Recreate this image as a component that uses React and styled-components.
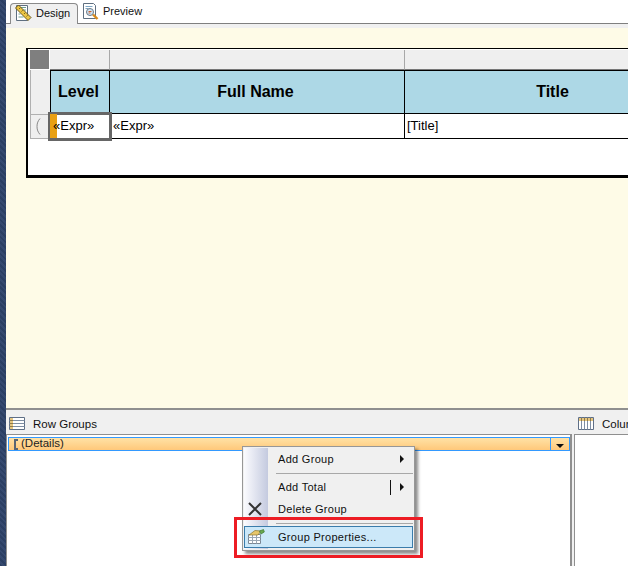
import React from "react";
import styled, { createGlobalStyle } from "styled-components";

const Global = createGlobalStyle`
  html, body { margin: 0; padding: 0; background: #fff; }
  #root { width: 628px; height: 566px; }
  svg { flex: none; }
`;
const Page = styled.div`
  position: relative; width: 628px; height: 566px; overflow: hidden; display: flex;
  font-family: "Liberation Sans", Arial, sans-serif; font-size: 11px; color: #111;
`;
const Strip = styled.div`
  width: 6px; flex: none;
  background: repeating-linear-gradient(45deg, #2b3f63 0 2px, #35496f 2px 4px);
`;
const Main = styled.div`flex: 1; min-width: 0; display: flex; flex-direction: column;`;
const TabBar = styled.div`
  height: 24px; flex: none; display: flex; align-items: flex-end; background: #fff; box-sizing: border-box;
  border-bottom: 1px solid #7f7f7f; padding-left: 4px;
`;
const ActiveTab = styled.div`
  height: 21px; box-sizing: border-box; display: flex; align-items: center; gap: 4px;
  padding: 0 7px 2px 3px; width: 68px; flex: none;
  background: #f0f0f0; border: 1px solid #8a8a8a; border-bottom: none; border-radius: 4px 4px 0 0;
  margin-bottom: -1px; position: relative;
`;
const IdleTab = styled.div`
  height: 20px; display: flex; align-items: center; gap: 3px; padding: 0 0 2px 4px;
`;
const Canvas = styled.div`
  height: 386px; flex: none; box-sizing: border-box; background: #fefbe7; padding: 20px 0 0 20px;
  border-top: 4px solid #f0f0f0; border-bottom: 2px solid #8f8f8f; overflow: hidden;
`;
const ReportBody = styled.div`
  width: 720px; height: 130px; box-sizing: border-box; background: #fff;
  border: solid #000; border-width: 1px 0 3px 2px; padding: 1px 0 0 2px;
`;
const Grid = styled.div`
  display: grid; grid-template-columns: 20px 60px 295px 1fr; grid-template-rows: 20px 44px 25px;
`;
const Corner = styled.div`background: #7f7f7f; margin: 0 1px 1px 0;`;
const ColHandle = styled.div`
  background: #efefef; border-right: 1px solid #a8a8a8; border-bottom: 1px solid #777;
  box-sizing: border-box;
`;
const RowHandle = styled.div`
  background: #efefef; box-sizing: border-box; border: solid #b0b0b0;
  border-width: ${p => p.$last ? "1px 0 1px 1px" : "0 0 0 1px"};
  display: flex; align-items: center; justify-content: center; padding-right: 4px;
`;
const HeadCell = styled.div`
  background: #add8e6; border: 1px solid #000; border-left-width: ${p => p.$first ? 1 : 0}px;
  box-sizing: border-box; display: flex; align-items: center; justify-content: center;
  padding-right: 3px; font-size: 16px; font-weight: bold; color: #000;
`;
const HeadCellLast = styled(HeadCell)`
  border-right: none; padding-right: 0; width: 295px;
`;
const DataCell = styled.div`
  background: #fff; border-bottom: 1px solid #000; border-right: ${p => p.$open ? "none" : "1px solid #000"};
  border-left: ${p => p.$first ? "1px solid #000" : "none"};
  box-sizing: border-box; font-size: 13px; color: #000; padding: 3px 0 0 ${p => p.$inset || 2}px; line-height: 18px;
  position: relative;
`;
const Selection = styled.div`
  position: absolute; left: -3px; top: -2px; width: 64px; height: 29px; box-sizing: border-box;
  border: 3px solid #666; z-index: 2;
`;
const Marker = styled.div`
  position: absolute; left: -1px; top: 0; width: 7px; height: 24px; background: #e8a013; z-index: 3;
`;
const CellText = styled.span`position: relative; z-index: 4;`;
const Panels = styled.div`flex: 1; display: flex; min-height: 0; background: #f0f0f0;`;
const RowPanel = styled.div`width: 566px; flex: none; display: flex; flex-direction: column;`;
const ColPanel = styled.div`flex: 1; display: flex; flex-direction: column; min-width: 0; margin-left: 2px;`;
const PanelHead = styled.div`
  height: 24px; flex: none; box-sizing: border-box; display: flex; align-items: center; background: #f0f0f0;
  white-space: nowrap; padding: 3px 0 0 ${p => p.$pad}px; gap: 8px; overflow: hidden; font-size: 11.5px;
`;
const RowBody = styled.div`
  flex: 1; background: #fff; border: solid #8f8f8f; border-width: 1px 2px 0 1px; padding: 2px 0 0 1px;
`;
const ColBody = styled.div`flex: 1; background: #fff; border: solid #8f8f8f; border-width: 1px 0 0 1px;`;
const DetailBar = styled.div`
  height: 14px; box-sizing: border-box; border: 1px solid #3399ff; display: flex; align-items: center;
  background: linear-gradient(#ffe2a6, #ffc87a); color: #222; padding-left: 4px; gap: 2px; width: 562px;
`;
const DetailLabel = styled.span`flex: 1; line-height: 12px; font-size: 11.5px; margin-top: -2px;`;
const DropButton = styled.div`
  width: 18px; align-self: stretch; border-left: 1px solid #3399ff; display: flex; align-items: center; justify-content: center;
`;
const Caret = styled.i`
  display: block; width: 0; height: 0; border: solid transparent; border-width: 4px 4px 0; border-top-color: #111; margin-top: 4px;
`;
const Menu = styled.div`
  position: absolute; left: 242px; top: 446px; width: 173px; height: 105px; box-sizing: border-box;
  border: 1px solid #979797; background: #f0f0f0; box-shadow: 3px 3px 3px rgba(0,0,0,.45);
  padding: 1px; display: flex; flex-direction: column; font-size: 11px;
`;
const MenuGutterBg = styled.div`
  position: absolute; left: 1px; top: 1px; bottom: 1px; width: 24px;
  background: linear-gradient(90deg, #fbfbfe, #c4cadf);
`;
const MenuItem = styled.div`
  position: relative; height: ${p => p.$h || 22}px; flex: none; display: flex; align-items: center; padding: 0 0 ${p => p.$h ? 2 : 0}px 34px;
  box-sizing: border-box; letter-spacing: .3px;
`;
const HotItem = styled(MenuItem)`
  background: #cce8f9; border: 1px solid #3a7cab; padding: 0 0 0 33px;
`;
const MenuLabel = styled.span`flex: 1;`;
const ItemIcon = styled.span`position: absolute; left: ${p => p.$x}px; top: ${p => p.$y}px; display: block; line-height: 0;`;
const Arrow = styled.i`
  display: block; width: 0; height: 0; border: solid transparent; border-width: 4px 0 4px 4px; border-left-color: #111; margin-right: 9px;
`;
const SplitBar = styled.i`display: block; width: 1px; height: 15px; background: #111; margin-right: 9px;`;
const MenuSep = styled.div`height: 1px; background: #a8a8a8; margin: ${p => p.$m} 0 2px 32px; flex: none; position: relative;`;
const Callout = styled.div`
  position: absolute; left: 234px; top: 517px; width: 189px; height: 41px; box-sizing: border-box;
  border: 3px solid #ed1c24; pointer-events: none;
`;

const DesignIcon = () => (
  <svg width="18" height="18" viewBox="0 0 18 18">
    <path d="M2.500 1.500h11v15h-11z" fill="#fff" stroke="#5f6f80" />
    <path d="M5 3.500h7M9 6h3M10 9h2M4.500 10h2M4.500 13h5" stroke="#6f9f8f" />
    <path d="M1.500 4 L4.500 1 L17 13.500 L14 16.500z" fill="#ecc544" stroke="#5e4c14" strokeWidth=".9" />
    <path d="M5 5l1.200-1.200M7.500 7.500l1.200-1.200M10 10l1.200-1.200M12.500 12.500l1.200-1.200" stroke="#5e4c14" strokeWidth=".8" />
  </svg>
);
const PreviewIcon = () => (
  <svg width="18" height="18" viewBox="0 0 18 18">
    <path d="M1.500 1.500h10l2 2v13h-12z" fill="#fff" stroke="#5f6f80" />
    <path d="M3.500 4.500h7M3.500 6.500h3" stroke="#7ea6c4" />
    <circle cx="8" cy="10" r="3.500" fill="#cfe6f7" stroke="#6a7784" />
    <path d="M6.500 9.500h3M6.500 11h2" stroke="#c9602e" />
    <path d="M11 12.500l4.500 4.500" stroke="#d78a1e" strokeWidth="2.400" />
  </svg>
);
const RowGroupsIcon = () => (
  <svg width="16" height="15" viewBox="0 0 16 15">
    <path d="M.5 1.500h15v12H.5z" fill="#fff" stroke="#5f6f86" />
    <path d="M.5 4.500h15M.5 7.500h15M.5 10.500h15" stroke="#7f8ea3" />
    <path d="M1 2h3v11H1z" fill="#e6c680" />
    <path d="M1 4.500h3M1 7.500h3M1 10.500h3" stroke="#8f7a48" />
  </svg>
);
const ColGroupsIcon = () => (
  <svg width="16" height="15" viewBox="0 0 16 15">
    <path d="M.5 1.500h15v12H.5z" fill="#fff" stroke="#5f6f86" />
    <path d="M3.500 1.500v12M6.500 1.500v12M9.500 1.500v12M12.500 1.500v12" stroke="#7f8ea3" />
    <path d="M1 2h14v3H1z" fill="#e6c680" />
    <path d="M3.500 2v3M6.500 2v3M9.500 2v3M12.500 2v3" stroke="#8f7a48" />
  </svg>
);
const Bracket = () => (
  <svg width="6" height="12" viewBox="0 0 6 12"><path d="M5 2H2v9h3" fill="none" stroke="#5a6572" strokeWidth="2" /></svg>
);
const Paren = () => (
  <svg width="5" height="17" viewBox="0 0 5 17"><path d="M4 .5C2 3 1 5 1 8.500s1 5.500 3 8" fill="none" stroke="#888" /></svg>
);
const DeleteIcon = () => (
  <svg width="14" height="14" viewBox="0 0 14 14"><path d="M1 1l12 12M13 1L1 13" stroke="#333" strokeWidth="2" /></svg>
);
const PropsIcon = () => (
  <svg width="18" height="16" viewBox="0 0 18 16">
    <path d="M1.500 5.500h12v9h-12z" fill="#fff" stroke="#7b8794" />
    <path d="M1.500 8.500h12M1.500 11.500h12M5.500 5.500v9M9.500 5.500v9" stroke="#9aa7b4" />
    <path d="M2 6l6-4.500 6 .5-3 4z" fill="#e8c76a" stroke="#8a7431" strokeWidth=".7" />
    <path d="M12.500 2l4-1.500.8 2.500-3.300 2z" fill="#6aa84f" stroke="#3f7a2f" strokeWidth=".7" />
  </svg>
);

export default function App() {
  return (
    <>
      <Global />
      <Page>
        <Strip />
        <Main>
          <TabBar>
            <ActiveTab><DesignIcon />Design</ActiveTab>
            <IdleTab><PreviewIcon />Preview</IdleTab>
          </TabBar>
          <Canvas>
            <ReportBody>
              <Grid>
                <Corner />
                <ColHandle />
                <ColHandle />
                <ColHandle />
                <RowHandle />
                <HeadCell $first>Level</HeadCell>
                <HeadCell>Full Name</HeadCell>
                <HeadCellLast>Title</HeadCellLast>
                <RowHandle $last><Paren /></RowHandle>
                <DataCell $first>
                  <Selection />
                  <Marker />
                  <CellText>«Expr»</CellText>
                </DataCell>
                <DataCell $inset={3}>«Expr»</DataCell>
                <DataCell $open>[Title]</DataCell>
              </Grid>
            </ReportBody>
          </Canvas>
          <Panels>
            <RowPanel>
              <PanelHead $pad={3}><RowGroupsIcon />Row Groups</PanelHead>
              <RowBody>
                <DetailBar>
                  <Bracket />
                  <DetailLabel>(Details)</DetailLabel>
                  <DropButton><Caret /></DropButton>
                </DetailBar>
              </RowBody>
            </RowPanel>
            <ColPanel>
              <PanelHead $pad={4}><ColGroupsIcon />Column Groups</PanelHead>
              <ColBody />
            </ColPanel>
          </Panels>
        </Main>
        <Menu>
          <MenuGutterBg />
          <MenuItem $h={24}><MenuLabel>Add Group</MenuLabel><Arrow /></MenuItem>
          <MenuSep $m="1px" />
          <MenuItem><MenuLabel>Add Total</MenuLabel><SplitBar /><Arrow /></MenuItem>
          <MenuItem><ItemIcon $x={4} $y={4}><DeleteIcon /></ItemIcon><MenuLabel>Delete Group</MenuLabel></MenuItem>
          <MenuSep $m="3px" />
          <HotItem><ItemIcon $x={2} $y={2}><PropsIcon /></ItemIcon><MenuLabel>Group Properties...</MenuLabel></HotItem>
        </Menu>
        <Callout />
      </Page>
    </>
  );
}
